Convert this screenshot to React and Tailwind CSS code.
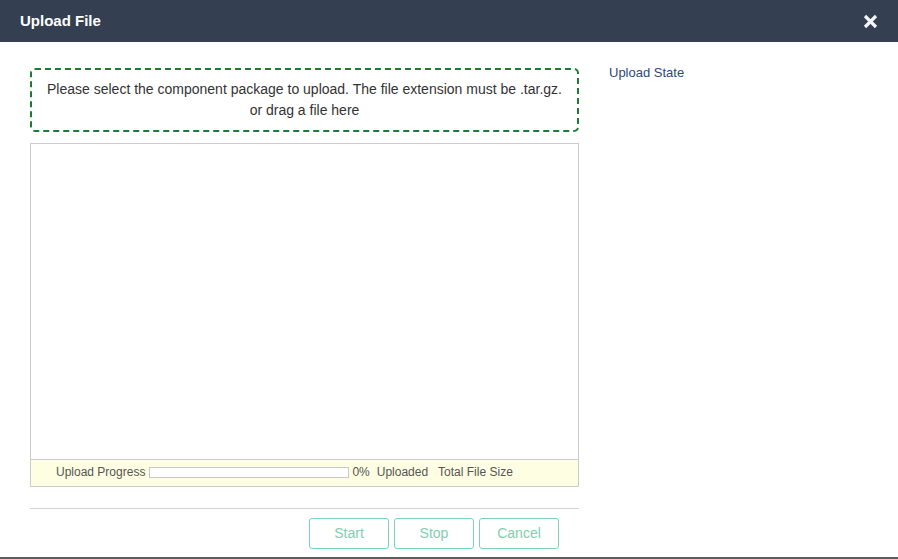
import React from "react";

function CloseIcon() {
  return (
    <svg width="15" height="15" viewBox="0 0 15 15" className="block">
      <path d="M2 2 L13 13 M13 2 L2 13" stroke="#f4f5f7" strokeWidth="3.2" strokeLinecap="butt" />
    </svg>
  );
}

export default function App() {
  return (
    <div
      className="w-[898px] h-[559px] bg-white border-b-2 border-[#5f5f5f] flex flex-col overflow-hidden"
      style={{ fontFamily: '"Liberation Sans", Arial, sans-serif' }}
    >
      {/* Header */}
      <div className="h-[42px] shrink-0 bg-[#343f52] flex items-center justify-between pl-[20px] pr-[20px]">
        <h2 className="text-[15px] font-bold text-white leading-none -mt-[2px]">Upload File</h2>
        <button className="p-0">
          <CloseIcon />
        </button>
      </div>

      {/* Body */}
      <div className="flex flex-1">
        <div className="ml-[30px] w-[549px] pt-[26px] flex flex-col">
          {/* Drop zone */}
          <div className="h-[64px] border-2 border-dashed border-[#1e7b34] rounded-[5px] flex flex-col items-center justify-center text-[14px] leading-[21px] text-[#333]">
            <p>Please select the component package to upload. The file extension must be .tar.gz.</p>
            <p>or drag a file here</p>
          </div>

          {/* File list */}
          <div className="mt-[11px] h-[344px] border border-[#cccccc] flex flex-col">
            <div className="flex-1 bg-white" />
            <div className="h-[27px] border-t border-[#cccccc] bg-[#fefee2] flex items-center pl-[25px] pb-[2px] text-[12px] text-[#555]">
              <span>Upload Progress</span>
              <div className="ml-[4px] w-[200px] h-[11px] border border-[#c8c8c8] bg-white" />
              <span className="ml-[3px]">0%</span>
              <span className="ml-[7px]">Uploaded</span>
              <span className="ml-[10px]">Total File Size</span>
            </div>
          </div>

          {/* Separator */}
          <div className="mt-[21px] border-t border-[#d2d0dc]" />

          {/* Buttons */}
          <div className="mt-[9px] flex justify-end gap-[5px] pr-[20px]">
            <button className="w-[80px] h-[31px] border border-[#80d2b4] rounded-[3px] text-[14px] text-[#7dcfb0] bg-white">
              Start
            </button>
            <button className="w-[80px] h-[31px] border border-[#80d2b4] rounded-[3px] text-[14px] text-[#7dcfb0] bg-white">
              Stop
            </button>
            <button className="w-[80px] h-[31px] border border-[#80d2b4] rounded-[3px] text-[14px] text-[#7dcfb0] bg-white">
              Cancel
            </button>
          </div>
        </div>

        {/* Right side */}
        <div className="ml-[30px] pt-[18px]">
          <span className="text-[13px] text-[#2c4a78]">Upload State</span>
        </div>
      </div>
    </div>
  );
}
